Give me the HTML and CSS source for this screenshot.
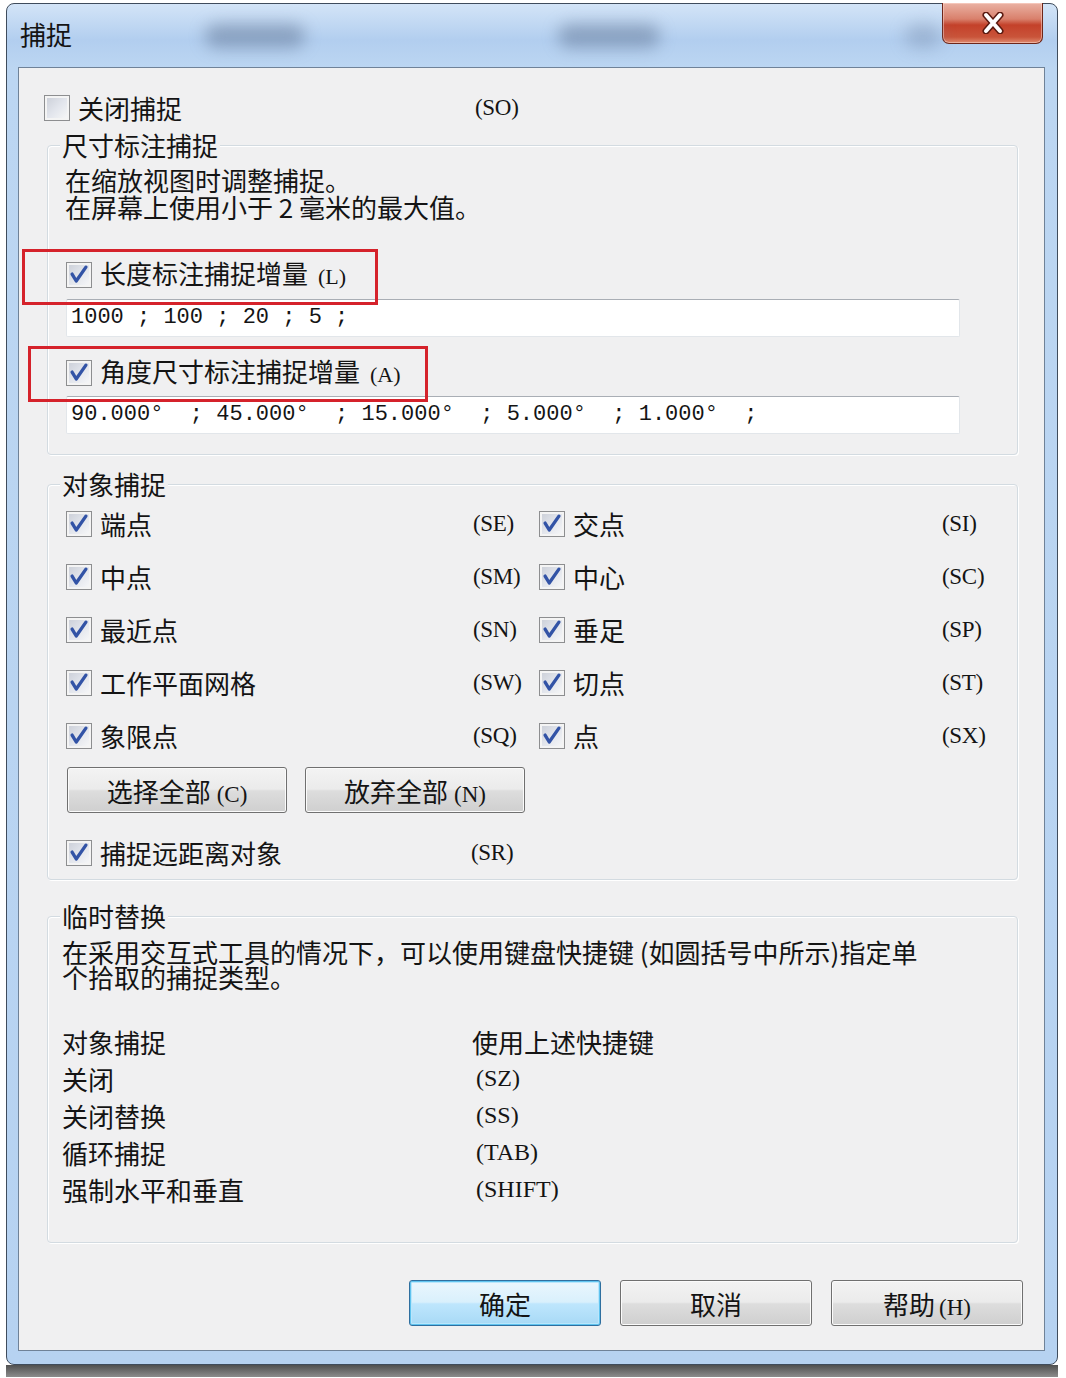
FILE: index.html
```html
<!DOCTYPE html>
<html lang="zh-CN">
<head>
    <meta charset="UTF-8">
    <meta name="viewport" content="width=device-width, initial-scale=1.0">
    <title>捕捉</title>
    <link rel="stylesheet" href="styles.css">
</head>
<body>
    <div class="janela">
        <div class="barraTitulo">
            <span class="tituloTexto">捕捉</span>
            <span class="borrao b1"></span>
            <span class="borrao b2"></span>
            <span class="borrao b3"></span>
            <button class="fechar">
                <svg width="26" height="22" viewBox="0 0 26 22">
                    <path d="M6 3 L20 19 M20 3 L6 19" stroke="#5b1a10" stroke-width="7" stroke-linecap="round"/>
                    <path d="M6 3 L20 19 M20 3 L6 19" stroke="#ffffff" stroke-width="4" stroke-linecap="round"/>
                </svg>
            </button>
        </div>

        <div class="cliente">
            <div class="linha linhaTopo">
                <span class="caixa"></span>
                <span class="rotulo">关闭捕捉</span>
                <span class="codigo">(SO)</span>
            </div>

            <fieldset class="grupo grupoCota">
                <legend>尺寸标注捕捉</legend>
                <p class="descricao">在缩放视图时调整捕捉。<br>在屏幕上使用小于 2 毫米的最大值。</p>

                <div class="linha marcado marcaL">
                    <span class="caixa"><svg viewBox="0 0 26 26"><path d="M5.5 12 L10 19.5 L20.5 4.5"/></svg></span>
                    <span class="rotuloLivre">长度标注捕捉增量<span class="codigoMenor">(L)</span></span>
                </div>
                <div class="campo">1000 ; 100 ; 20 ; 5 ;</div>

                <div class="linha marcado marcaA">
                    <span class="caixa"><svg viewBox="0 0 26 26"><path d="M5.5 12 L10 19.5 L20.5 4.5"/></svg></span>
                    <span class="rotuloLivre">角度尺寸标注捕捉增量<span class="codigoMenor">(A)</span></span>
                </div>
                <div class="campo">90.000°  ; 45.000°  ; 15.000°  ; 5.000°  ; 1.000°  ;</div>
            </fieldset>

            <fieldset class="grupo grupoObjeto">
                <legend>对象捕捉</legend>
                <div class="gradeSnap">
                    <div class="linha item">
                        <span class="caixa"><svg viewBox="0 0 26 26"><path d="M5.5 12 L10 19.5 L20.5 4.5"/></svg></span>
                        <span class="rotulo">端点</span><span class="codigo">(SE)</span>
                    </div>
                    <div class="linha item">
                        <span class="caixa"><svg viewBox="0 0 26 26"><path d="M5.5 12 L10 19.5 L20.5 4.5"/></svg></span>
                        <span class="rotulo">交点</span><span class="codigo">(SI)</span>
                    </div>
                    <div class="linha item">
                        <span class="caixa"><svg viewBox="0 0 26 26"><path d="M5.5 12 L10 19.5 L20.5 4.5"/></svg></span>
                        <span class="rotulo">中点</span><span class="codigo">(SM)</span>
                    </div>
                    <div class="linha item">
                        <span class="caixa"><svg viewBox="0 0 26 26"><path d="M5.5 12 L10 19.5 L20.5 4.5"/></svg></span>
                        <span class="rotulo">中心</span><span class="codigo">(SC)</span>
                    </div>
                    <div class="linha item">
                        <span class="caixa"><svg viewBox="0 0 26 26"><path d="M5.5 12 L10 19.5 L20.5 4.5"/></svg></span>
                        <span class="rotulo">最近点</span><span class="codigo">(SN)</span>
                    </div>
                    <div class="linha item">
                        <span class="caixa"><svg viewBox="0 0 26 26"><path d="M5.5 12 L10 19.5 L20.5 4.5"/></svg></span>
                        <span class="rotulo">垂足</span><span class="codigo">(SP)</span>
                    </div>
                    <div class="linha item">
                        <span class="caixa"><svg viewBox="0 0 26 26"><path d="M5.5 12 L10 19.5 L20.5 4.5"/></svg></span>
                        <span class="rotulo">工作平面网格</span><span class="codigo">(SW)</span>
                    </div>
                    <div class="linha item">
                        <span class="caixa"><svg viewBox="0 0 26 26"><path d="M5.5 12 L10 19.5 L20.5 4.5"/></svg></span>
                        <span class="rotulo">切点</span><span class="codigo">(ST)</span>
                    </div>
                    <div class="linha item">
                        <span class="caixa"><svg viewBox="0 0 26 26"><path d="M5.5 12 L10 19.5 L20.5 4.5"/></svg></span>
                        <span class="rotulo">象限点</span><span class="codigo">(SQ)</span>
                    </div>
                    <div class="linha item">
                        <span class="caixa"><svg viewBox="0 0 26 26"><path d="M5.5 12 L10 19.5 L20.5 4.5"/></svg></span>
                        <span class="rotulo">点</span><span class="codigo">(SX)</span>
                    </div>
                </div>

                <div class="botoesGrupo">
                    <button class="botao botaoTodos">选择全部<span class="codigoMenor">(C)</span></button>
                    <button class="botao botaoTodos">放弃全部<span class="codigoMenor">(N)</span></button>
                </div>

                <div class="linha item linhaRemota">
                    <span class="caixa"><svg viewBox="0 0 26 26"><path d="M5.5 12 L10 19.5 L20.5 4.5"/></svg></span>
                    <span class="rotulo">捕捉远距离对象</span><span class="codigo">(SR)</span>
                </div>
            </fieldset>

            <fieldset class="grupo grupoTemp">
                <legend>临时替换</legend>
                <p class="descricao descTemp">在采用交互式工具的情况下，可以使用键盘快捷键 (如圆括号中所示)指定单<br>个拾取的捕捉类型。</p>
                <div class="tabelaAtalhos">
                    <span>对象捕捉</span><span>使用上述快捷键</span>
                    <span>关闭</span><span class="codigoTab">(SZ)</span>
                    <span>关闭替换</span><span class="codigoTab">(SS)</span>
                    <span>循环捕捉</span><span class="codigoTab">(TAB)</span>
                    <span>强制水平和垂直</span><span class="codigoTab">(SHIFT)</span>
                </div>
            </fieldset>

            <div class="rodape">
                <button class="botao botaoRodape padrao">确定</button>
                <button class="botao botaoRodape">取消</button>
                <button class="botao botaoRodape">帮助<span class="codigoMenor">(H)</span></button>
            </div>
        </div>
    </div>
    <div class="sombra"></div>
</body>
</html>
```

FILE: styles.css
```css
body {
    margin: 0;
    background: #ffffff;
    font-family: "Noto Sans CJK SC", sans-serif;
    font-size: 26px;
    color: #141414;
}

.janela {
    width: 1052px;
    margin: 3px 0 0 6px;
    box-sizing: border-box;
    padding: 0 12px 13px 11px;
    border: 1px solid #3f4c5c;
    border-radius: 8px;
    background: linear-gradient(180deg, #d3e4f7 0, #b2ceef 36px, #bcd6f2 64px, #b6d2f1 100%);
}

.barraTitulo {
    display: flex;
    align-items: center;
    height: 63px;
    padding-left: 2px;
}
.tituloTexto {
    font-size: 26px;
    line-height: 30px;
    margin-top: -4px;
}
.borrao {
    display: inline-block;
    height: 24px;
    border-radius: 12px;
    background: rgba(85, 105, 135, 0.45);
    filter: blur(8px);
}
.b1 {
    width: 100px;
    margin-left: 133px;
}
.b2 {
    width: 102px;
    margin-left: 253px;
}
.b3 {
    width: 36px;
    margin-left: 245px;
    background: rgba(110, 130, 160, 0.35);
}
.fechar {
    align-self: flex-start;
    margin: -1px 2px 0 auto;
    width: 101px;
    height: 41px;
    padding: 0;
    border: 1px solid #6e2619;
    border-top: none;
    border-radius: 0 0 7px 7px;
    background: linear-gradient(180deg, #eab2a4 0, #d9806c 40%, #c4412a 55%, #c9543a 85%, #de8a6e 100%);
    box-shadow: inset 0 0 0 1px rgba(255, 220, 210, 0.5);
    display: flex;
    align-items: center;
    justify-content: center;
}

.cliente {
    background: #f0f0f1;
    border: 1px solid #6f8298;
    padding: 25px 21px 24px 25px;
}

.linha {
    display: flex;
    align-items: center;
    height: 30px;
}
.linhaTopo {
    width: 478px;
}
.caixa {
    flex: none;
    width: 26px;
    height: 26px;
    box-sizing: border-box;
    margin-right: 8px;
    border: 1px solid #8d8e90;
    background: linear-gradient(135deg, #c9cdd6 0, #e2e5ec 50%, #f9f9f9 100%);
    box-shadow: inset 0 0 0 2px #f4f4f4;
}
.caixa svg {
    display: block;
    width: 24px;
    height: 24px;
}
.caixa path {
    fill: none;
    stroke: #3253a6;
    stroke-width: 3.6;
    stroke-linejoin: round;
    stroke-linecap: round;
}
.rotulo {
    flex: 1;
    line-height: 30px;
}
.rotuloLivre {
    line-height: 30px;
}
.codigo {
    width: 47px;
    font-family: "Liberation Serif", serif;
    font-size: 23px;
    letter-spacing: -0.3px;
    white-space: nowrap;
}
.codigoMenor {
    font-family: "Liberation Serif", serif;
    font-size: 22px;
    margin-left: 10px;
}

.grupo {
    margin: 7px 5px 0 3px;
    padding: 6px 0 20px 18px;
    min-width: 0;
    border: 1px solid #d3dbe1;
    border-radius: 4px;
    box-shadow: inset 1px 1px 0 #ffffff, 1px 1px 0 #ffffff;
}
.grupo legend {
    padding: 0 2px;
    margin-left: -6px;
    line-height: 30px;
    background: #f0f0f1;
}
.descricao {
    margin: 0 0 0 -1px;
    line-height: 27px;
}

.marcado {
    position: relative;
}
.marcado::after {
    content: "";
    position: absolute;
    box-sizing: border-box;
    height: 56px;
    border: 3px solid #d5222b;
}
.marcaL {
    margin-top: 40px;
}
.marcaL::after {
    left: -44px;
    top: -11px;
    width: 356px;
}
.marcaA {
    margin-top: 21px;
}
.marcaA::after {
    left: -38px;
    top: -12px;
    width: 400px;
}

.campo {
    width: 894px;
    height: 38px;
    box-sizing: border-box;
    margin-top: 9px;
    padding-left: 4px;
    border: 1px solid #e2e6ea;
    border-top-color: #a9aeb5;
    border-radius: 2px;
    background: #ffffff;
    font-family: "Liberation Mono", monospace;
    font-size: 22px;
    line-height: 36px;
    white-space: pre;
}
.marcaA + .campo {
    margin-top: 8px;
}

.grupoObjeto {
    margin-top: 14px;
    padding-top: 10px;
    padding-bottom: 11px;
}
.gradeSnap {
    display: grid;
    grid-template-columns: 454px 450px;
    column-gap: 19px;
    row-gap: 23px;
}

.botao {
    box-sizing: border-box;
    height: 46px;
    padding: 0;
    border: 1px solid #707070;
    border-radius: 3px;
    background: linear-gradient(180deg, #f3f3f3 0, #ebebeb 48%, #dddddd 52%, #cfcfcf 100%);
    box-shadow: inset 0 0 0 1px #fbfbfb;
    font-family: "Noto Sans CJK SC", sans-serif;
    font-size: 26px;
    color: #141414;
}
.botoesGrupo {
    display: flex;
    gap: 18px;
    margin-top: 16px;
    margin-left: 1px;
}
.botaoTodos {
    width: 220px;
}
.botaoTodos .codigoMenor {
    font-size: 23px;
    margin-left: 6px;
}
.linhaRemota {
    width: 452px;
    margin-top: 25px;
}

.grupoTemp {
    margin-top: 21px;
    padding-top: 8px;
    padding-bottom: 34px;
}
.descTemp {
    margin-left: -4px;
    line-height: 25px;
}
.tabelaAtalhos {
    display: grid;
    grid-template-columns: 410px auto;
    margin: 34px 0 0 -4px;
    line-height: 37px;
}
.codigoTab {
    font-family: "Liberation Serif", serif;
    font-size: 24px;
    margin-left: 4px;
}

.rodape {
    display: flex;
    justify-content: flex-end;
    gap: 19px;
    margin-top: 37px;
}
.botaoRodape {
    width: 192px;
}
.botaoRodape .codigoMenor {
    font-size: 23px;
    margin-left: 4px;
}
.padrao {
    border-color: #2f6f9f;
    background: linear-gradient(180deg, #eaf6fd 0, #d9f0fc 48%, #bee6fd 52%, #a7d9f5 100%);
    box-shadow: inset 0 0 0 1px #5fc3ef, inset 0 0 0 2px #b9e6fb;
}

.sombra {
    width: 1052px;
    height: 12px;
    margin-left: 6px;
    background: linear-gradient(180deg, #505050, #8c8c8c);
}
```
